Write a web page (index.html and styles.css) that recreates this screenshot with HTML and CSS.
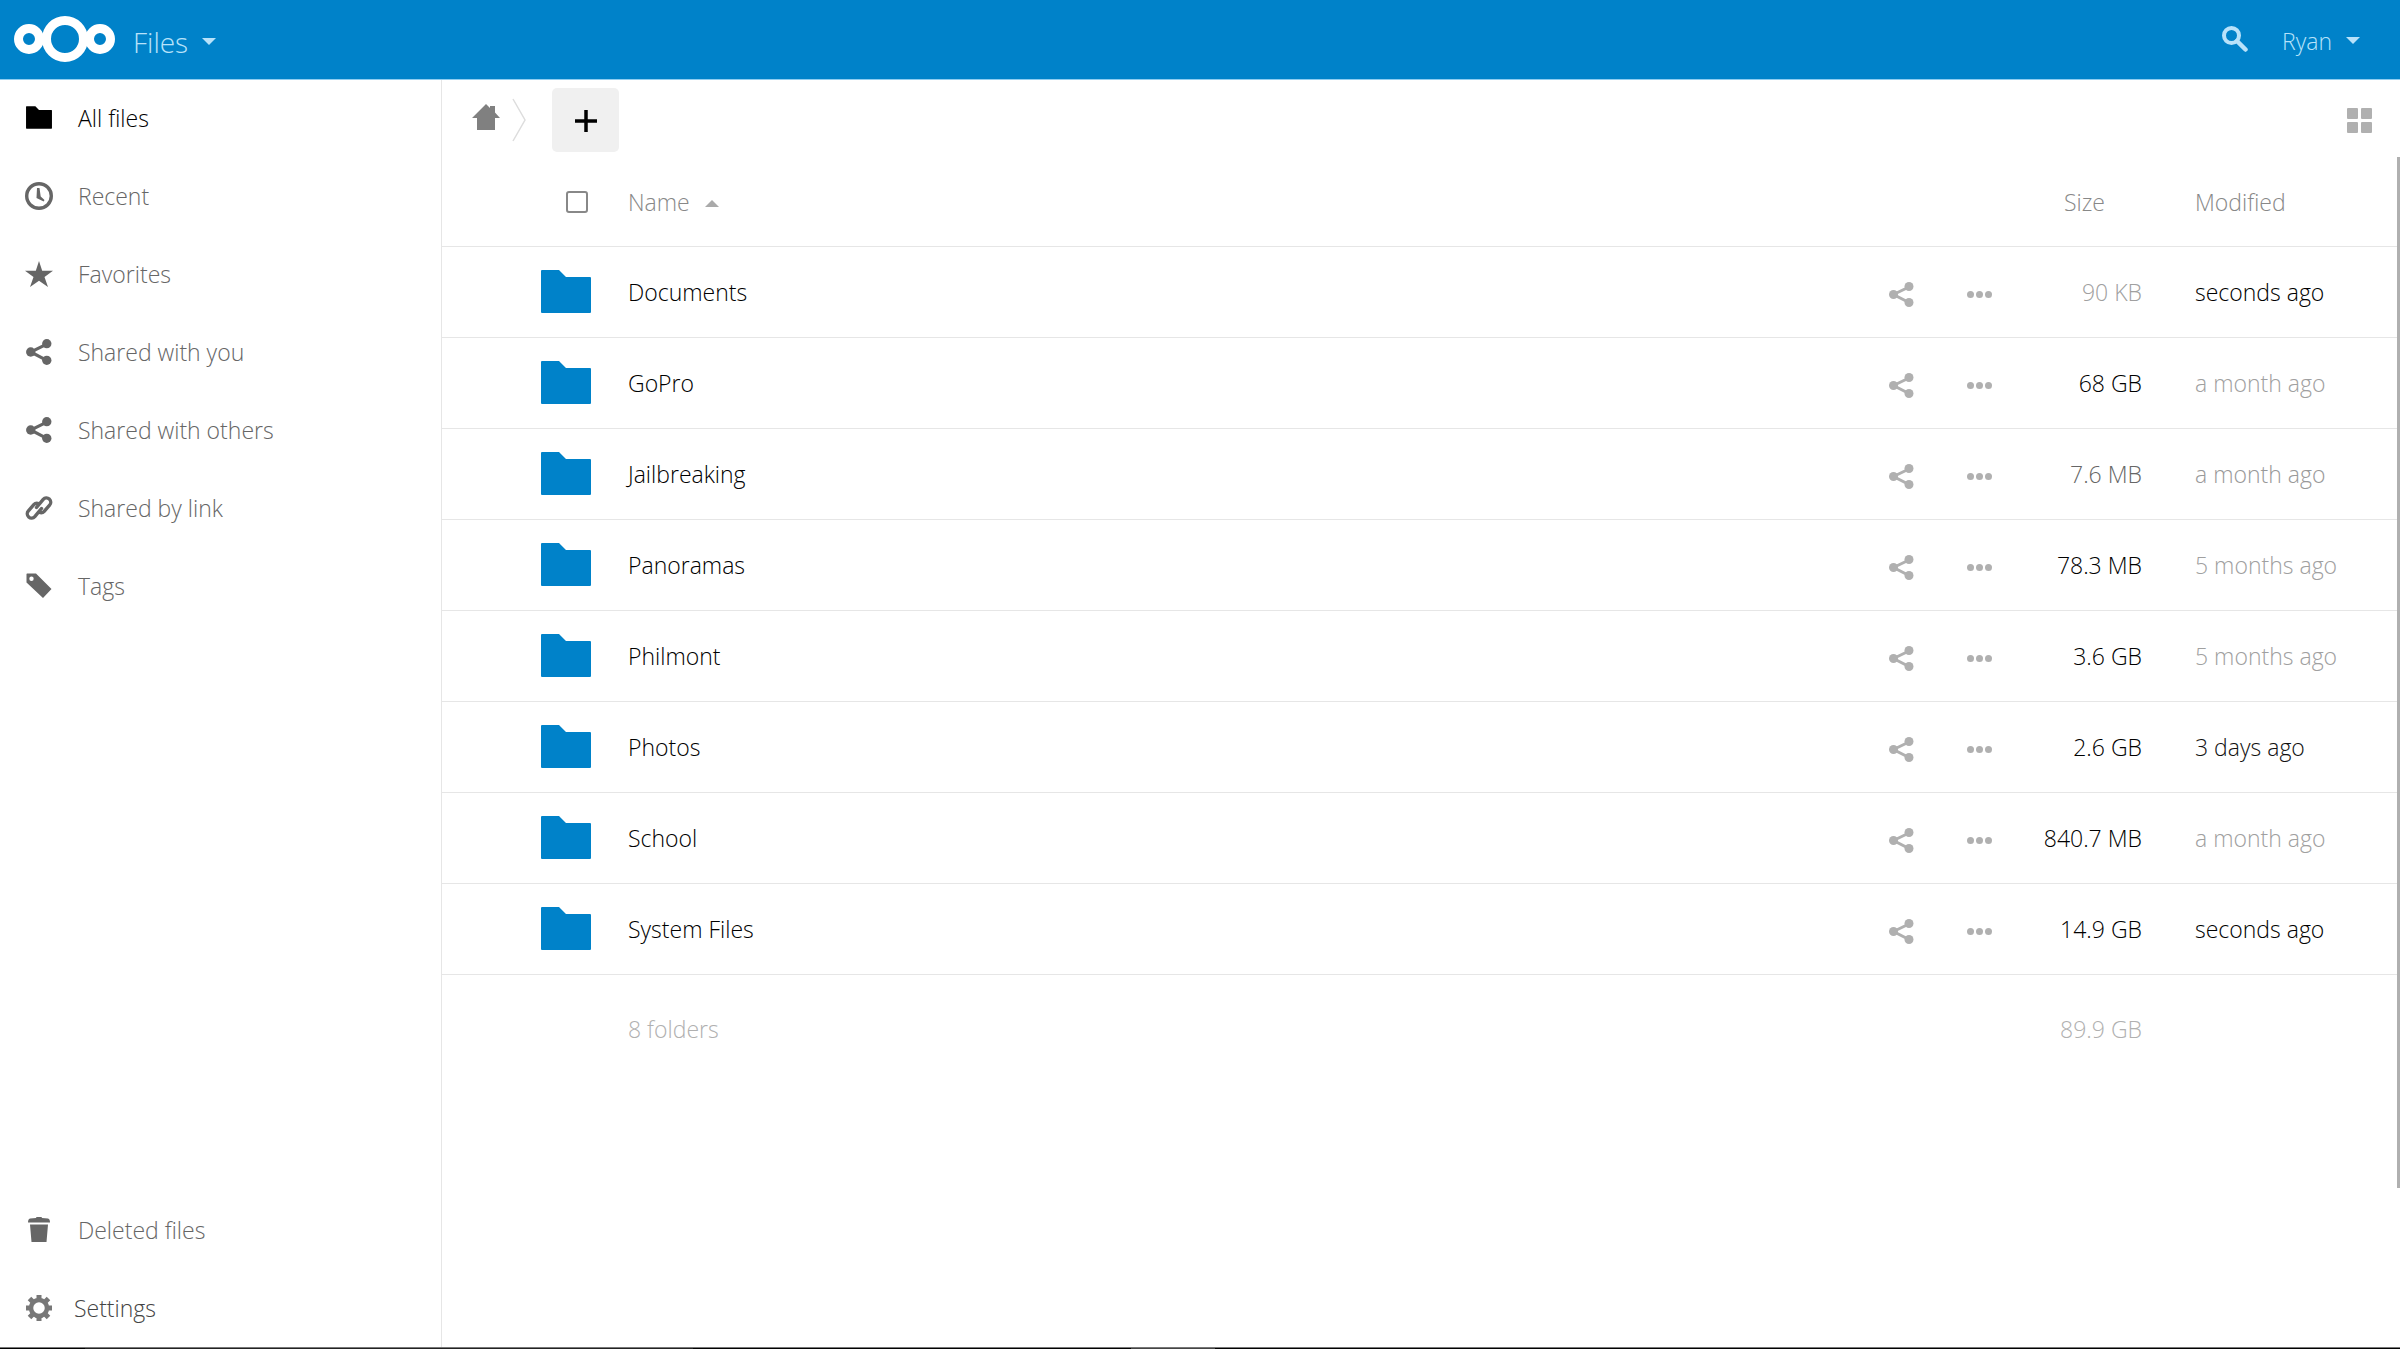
FILE: index.html
```html
<!DOCTYPE html>
<html lang="en">

<head>
    <meta charset="UTF-8">
    <meta name="viewport" content="width=device-width, initial-scale=1.0">
    <title>Files - Nextcloud</title>
    <link rel="stylesheet" href="styles.css">
</head>

<body>

    <!-- Shared icons -->
    <svg class="sprite" aria-hidden="true">
        <symbol id="i-folder" viewBox="0 0 50 43">
            <path d="M1 0h17l7 7h24q1 0 1 1v34q0 1-1 1H1q-1 0-1-1V1q0-1 1-1z"/>
        </symbol>
        <symbol id="i-share" viewBox="0 0 25 25">
            <path d="M20 5L4.500 12.500 20 20.500" fill="none" stroke="currentColor" stroke-width="3"/>
            <circle cx="20" cy="4.500" r="4.500"/>
            <circle cx="4.500" cy="12.500" r="4.500"/>
            <circle cx="20" cy="20.500" r="4.500"/>
        </symbol>
        <symbol id="i-more" viewBox="0 0 25 25">
            <circle cx="3.500" cy="12.500" r="3.500"/>
            <circle cx="12.500" cy="12.500" r="3.500"/>
            <circle cx="21.500" cy="12.500" r="3.500"/>
        </symbol>
        <symbol id="i-caret" viewBox="0 0 14 7">
            <path d="M0 0h14L7 7z"/>
        </symbol>
    </svg>

    <header class="header">
        <a class="logo" href="#" aria-label="Home">
            <svg viewBox="0 0 102 48" width="102" height="48">
                <g fill="none" stroke="#fff">
                    <circle cx="15" cy="24" r="10.500" stroke-width="9"/>
                    <circle cx="51" cy="24" r="18.500" stroke-width="9"/>
                    <circle cx="86" cy="24" r="10.500" stroke-width="9"/>
                </g>
            </svg>
        </a>
        <button class="app-menu">Files <svg class="caret"><use href="#i-caret"/></svg></button>
        <div class="header-right">
            <button class="search" aria-label="Search">
                <svg viewBox="0 0 26 26" width="26" height="26">
                    <circle cx="9.500" cy="9.500" r="7.500" fill="none" stroke="currentColor" stroke-width="4"/>
                    <path d="M15 15l8.500 8.500" stroke="currentColor" stroke-width="4.500" stroke-linecap="round"/>
                </svg>
            </button>
            <button class="user-menu">Ryan <svg class="caret"><use href="#i-caret"/></svg></button>
        </div>
    </header>

    <div class="content">
        <nav class="navigation">
            <ul class="nav-list">
                <li><a class="active" href="#"><svg class="icon" viewBox="-1 -2 27 27"><use href="#i-folder" x="0" y="0" width="25" height="22"/></svg>All files</a></li>
                <li><a href="#"><svg class="icon" viewBox="0 0 28 28"><circle cx="14" cy="14" r="12.300" fill="none" stroke="currentColor" stroke-width="3.400"/><path d="M12 6h2.500l1.200 8.500 3.800 3.500-.8 1.500-7.200-3.500z"/></svg>Recent</a></li>
                <li><a href="#"><svg class="icon" viewBox="0 0 28 28"><path d="M14 1l3.200 9.700H28l-8.500 6.200L23 27l-9-6.200L5 27l3.500-10.100L0 10.700h10.800z"/></svg>Favorites</a></li>
                <li><a href="#"><svg class="icon" viewBox="-1 -1 27 27"><use href="#i-share" width="25" height="25"/></svg>Shared with you</a></li>
                <li><a href="#"><svg class="icon" viewBox="-1 -1 27 27"><use href="#i-share" width="25" height="25"/></svg>Shared with others</a></li>
                <li><a href="#"><svg class="icon" viewBox="0 0 28 28"><g fill="none" stroke="currentColor" stroke-width="3.400" stroke-linecap="round"><path d="M11.500 13.500l6.700-8.200a4.300 4.300 0 0 1 6.400 5.800l-5.400 6.200a4.300 4.300 0 0 1-4.700 1.200"/><path d="M16.500 14.500l-6.700 8.200a4.300 4.300 0 0 1-6.400-5.800l5.400-6.200a4.300 4.300 0 0 1 4.700-1.200"/></g></svg>Shared by link</a></li>
                <li><a href="#"><svg class="icon" viewBox="0 0 28 28"><path fill-rule="evenodd" d="M2 1.500h9L26.500 17 18 26 1.500 10.500V2zM6.500 4.500a2.200 2.200 0 1 0 0 4.400 2.200 2.200 0 0 0 0-4.400z"/></svg>Tags</a></li>
            </ul>
            <ul class="nav-list nav-bottom">
                <li><a href="#"><svg class="icon" viewBox="0 0 28 28"><path d="M11 2q0-1 1-1h4q1 0 1 1l6 .5q2 .5 2 4H3q0-3.500 2-4zM5 8.500h18L21.500 26h-15z"/></svg>Deleted files</a></li>
                <li>
                    <button class="settings">
                        <svg class="icon" viewBox="-14 -14 28 28">
                            <circle r="8" fill="none" stroke="currentColor" stroke-width="4.500"/>
                            <g stroke="currentColor" stroke-width="5">
                                <path d="M0-13v4M0 13v-4M-13 0h4M13 0h-4"/>
                                <path d="M-9.500-9.500l3 3M9.500 9.500l-3-3M-9.500 9.500l3-3M9.500-9.500l-3 3"/>
                            </g>
                        </svg>Settings
                    </button>
                </li>
            </ul>
        </nav>

        <main class="files">
            <div class="controls">
                <a class="home" href="#" aria-label="Home">
                    <svg viewBox="0 0 28 26" width="28" height="26"><path d="M14 0l4 4V2h5v6.500l5 5.500h-5v12H5V14H0z"/></svg>
                </a>
                <svg class="crumb-arrow" viewBox="0 0 14 44" width="14" height="44"><path d="M1 1l12 21L1 43" fill="none" stroke="#ddd" stroke-width="1.500"/></svg>
                <button class="new" aria-label="New">
                    <svg viewBox="0 0 22 22" width="22" height="22"><path d="M11 0v22M0 11h22" stroke="#000" stroke-width="3.500"/></svg>
                </button>
                <button class="view-toggle" aria-label="Grid view">
                    <svg viewBox="0 0 25 25" width="25" height="25"><rect width="11" height="11" rx="1"/><rect x="14" width="11" height="11" rx="1"/><rect y="14" width="11" height="11" rx="1"/><rect x="14" y="14" width="11" height="11" rx="1"/></svg>
                </button>
            </div>

            <table class="file-table">
                <thead>
                    <tr>
                        <th class="col-icon"><input class="select-all" type="checkbox" aria-label="Select all"></th>
                        <th class="col-name">Name <svg class="caret sort"><use href="#i-caret"/></svg></th>
                        <th class="col-actions"></th>
                        <th class="col-size">Size</th>
                        <th class="col-date">Modified</th>
                    </tr>
                </thead>
                <tbody id="file-list"></tbody>
                <tfoot>
                    <tr>
                        <td></td>
                        <td>8 folders</td>
                        <td></td>
                        <td class="col-size">89.9 GB</td>
                        <td></td>
                    </tr>
                </tfoot>
            </table>
            <div class="scroll-thumb"></div>
        </main>
    </div>

    <div class="bottom-edge"></div>

    <script>
        // name, size, size color, modified, modified color
        var files = [
            ['Documents', '90 KB', '#a0a0a0', 'seconds ago', '#000'],
            ['GoPro', '68 GB', '#000', 'a month ago', '#a0a0a0'],
            ['Jailbreaking', '7.6 MB', '#666', 'a month ago', '#999'],
            ['Panoramas', '78.3 MB', '#000', '5 months ago', '#a0a0a0'],
            ['Philmont', '3.6 GB', '#000', '5 months ago', '#a0a0a0'],
            ['Photos', '2.6 GB', '#000', '3 days ago', '#111'],
            ['School', '840.7 MB', '#000', 'a month ago', '#a0a0a0'],
            ['System Files', '14.9 GB', '#000', 'seconds ago', '#000']
        ];

        document.getElementById('file-list').innerHTML = files.map(function(f) {
            return '<tr>' +
                '<td class="col-icon"><svg class="folder"><use href="#i-folder"/></svg></td>' +
                '<td class="col-name"><a href="#">' + f[0] + '</a></td>' +
                '<td class="col-actions"><div class="actions">' +
                '<button aria-label="Share"><svg><use href="#i-share"/></svg></button>' +
                '<button aria-label="More"><svg><use href="#i-more"/></svg></button>' +
                '</div></td>' +
                '<td class="col-size" style="color: ' + f[2] + '">' + f[1] + '</td>' +
                '<td class="col-date" style="color: ' + f[4] + '">' + f[3] + '</td>' +
                '</tr>';
        }).join('');
    </script>

</body>

</html>
```
FILE: styles.css
```css
* {
    box-sizing: border-box;
}

body {
    margin: 0;
    height: 100vh;
    display: flex;
    flex-direction: column;
    background: #fff;
    color: #000;
    font-family: "Open Sans", sans-serif;
    font-size: 23px;
    font-weight: 300;
    line-height: 32px;
}

a {
    color: inherit;
    text-decoration: none;
}

button {
    display: flex;
    align-items: center;
    padding: 0;
    border: 0;
    background: none;
    color: inherit;
    font: inherit;
    cursor: pointer;
}

svg {
    display: block;
    fill: currentColor;
}

.sprite {
    position: absolute;
    width: 0;
    height: 0;
}

.caret {
    width: 14px;
    height: 7px;
}

/* Header */
.header {
    display: flex;
    align-items: center;
    flex: none;
    height: 80px;
    padding: 0 40px 2px 14px;
    border-bottom: 1px solid #8fcdf0;
    background: #0082c9;
    color: #b8e2fa;
}

.logo {
    margin-right: 17px;
}

.app-menu {
    gap: 14px;
    padding-top: 6px;
    font-size: 28px;
}

.header-right {
    display: flex;
    align-items: center;
    gap: 34px;
    margin-left: auto;
}

.user-menu {
    gap: 14px;
    padding-top: 4px;
}

/* Layout */
.content {
    display: flex;
    flex: 1;
    min-height: 0;
}

.navigation {
    display: flex;
    flex-direction: column;
    justify-content: space-between;
    flex: none;
    width: 442px;
    border-right: 1px solid #e6e6e6;
}

.nav-list {
    margin: 0;
    padding: 0;
    list-style: none;
}

.nav-list a,
.settings {
    display: flex;
    align-items: center;
    gap: 25px;
    width: 100%;
    height: 78px;
    padding: 0 0 2px 25px;
    color: #666;
}

.nav-list .active {
    color: #000;
}

.nav-bottom a,
.nav-bottom .settings {
    padding-bottom: 0;
}

.nav-bottom .settings {
    gap: 21px;
    color: #444;
}

.icon {
    width: 28px;
    height: 28px;
    color: #666;
}

.active .icon {
    color: #000;
}

.settings .icon {
    color: #777;
}

/* File list */
.files {
    position: relative;
    flex: 1;
}

.controls {
    display: flex;
    align-items: center;
    height: 80px;
    padding: 0 28px 0 30px;
}

.home {
    padding-bottom: 6px;
    color: #808080;
}

.crumb-arrow {
    margin: 0 26px 0 12px;
}

.new {
    justify-content: center;
    width: 67px;
    height: 64px;
    padding-top: 2px;
    border-radius: 5px;
    background: #f0f0f0;
}

.view-toggle {
    margin-left: auto;
    color: #b0b0b0;
}

.file-table {
    width: 100%;
    border-collapse: collapse;
    table-layout: fixed;
}

.file-table th,
.file-table td {
    height: 91px;
    padding: 0;
    border-bottom: 1px solid #e6e6e6;
    text-align: left;
    font-weight: 300;
    white-space: nowrap;
}

.file-table thead th {
    height: 86px;
    padding-bottom: 2px;
    color: #888;
}

.file-table .col-icon {
    width: 186px;
    padding-left: 99px;
}

.file-table .select-all {
    display: block;
    appearance: none;
    width: 22px;
    height: 22px;
    margin: 0 0 0 25px;
    border: 2px solid #888;
    border-radius: 3px;
}

.col-name .sort {
    display: inline-block;
    margin: 0 0 4px 9px;
    color: #aaa;
    transform: rotate(180deg);
}

.file-table .col-actions {
    width: 146px;
}

.actions {
    display: flex;
    gap: 53px;
    padding-top: 6px;
    color: #b0b0b0;
}

.actions svg {
    width: 25px;
    height: 25px;
}

.folder {
    width: 50px;
    height: 43px;
    color: #0082c9;
}

.file-table .col-size {
    width: 160px;
    padding-right: 53px;
    text-align: right;
}

.file-table thead .col-size {
    padding-right: 90px;
}

.file-table .col-date {
    width: 205px;
}

.file-table tfoot td {
    height: 109px;
    border: 0;
    color: #b0b0b0;
}

.scroll-thumb {
    position: absolute;
    top: 77px;
    right: 0;
    width: 3px;
    height: calc(100% - 236px);
    background: #b0b0b0;
}

/* Dark strip along the bottom of the window */
.bottom-edge {
    flex: none;
    height: 2px;
    border-top: 1px solid #777;
    background: linear-gradient(to right, #000 85px, #222 85px, #222 693px, #000 693px, #000 1131px, #444 1131px, #444 1215px, #000 1215px);
}
```
